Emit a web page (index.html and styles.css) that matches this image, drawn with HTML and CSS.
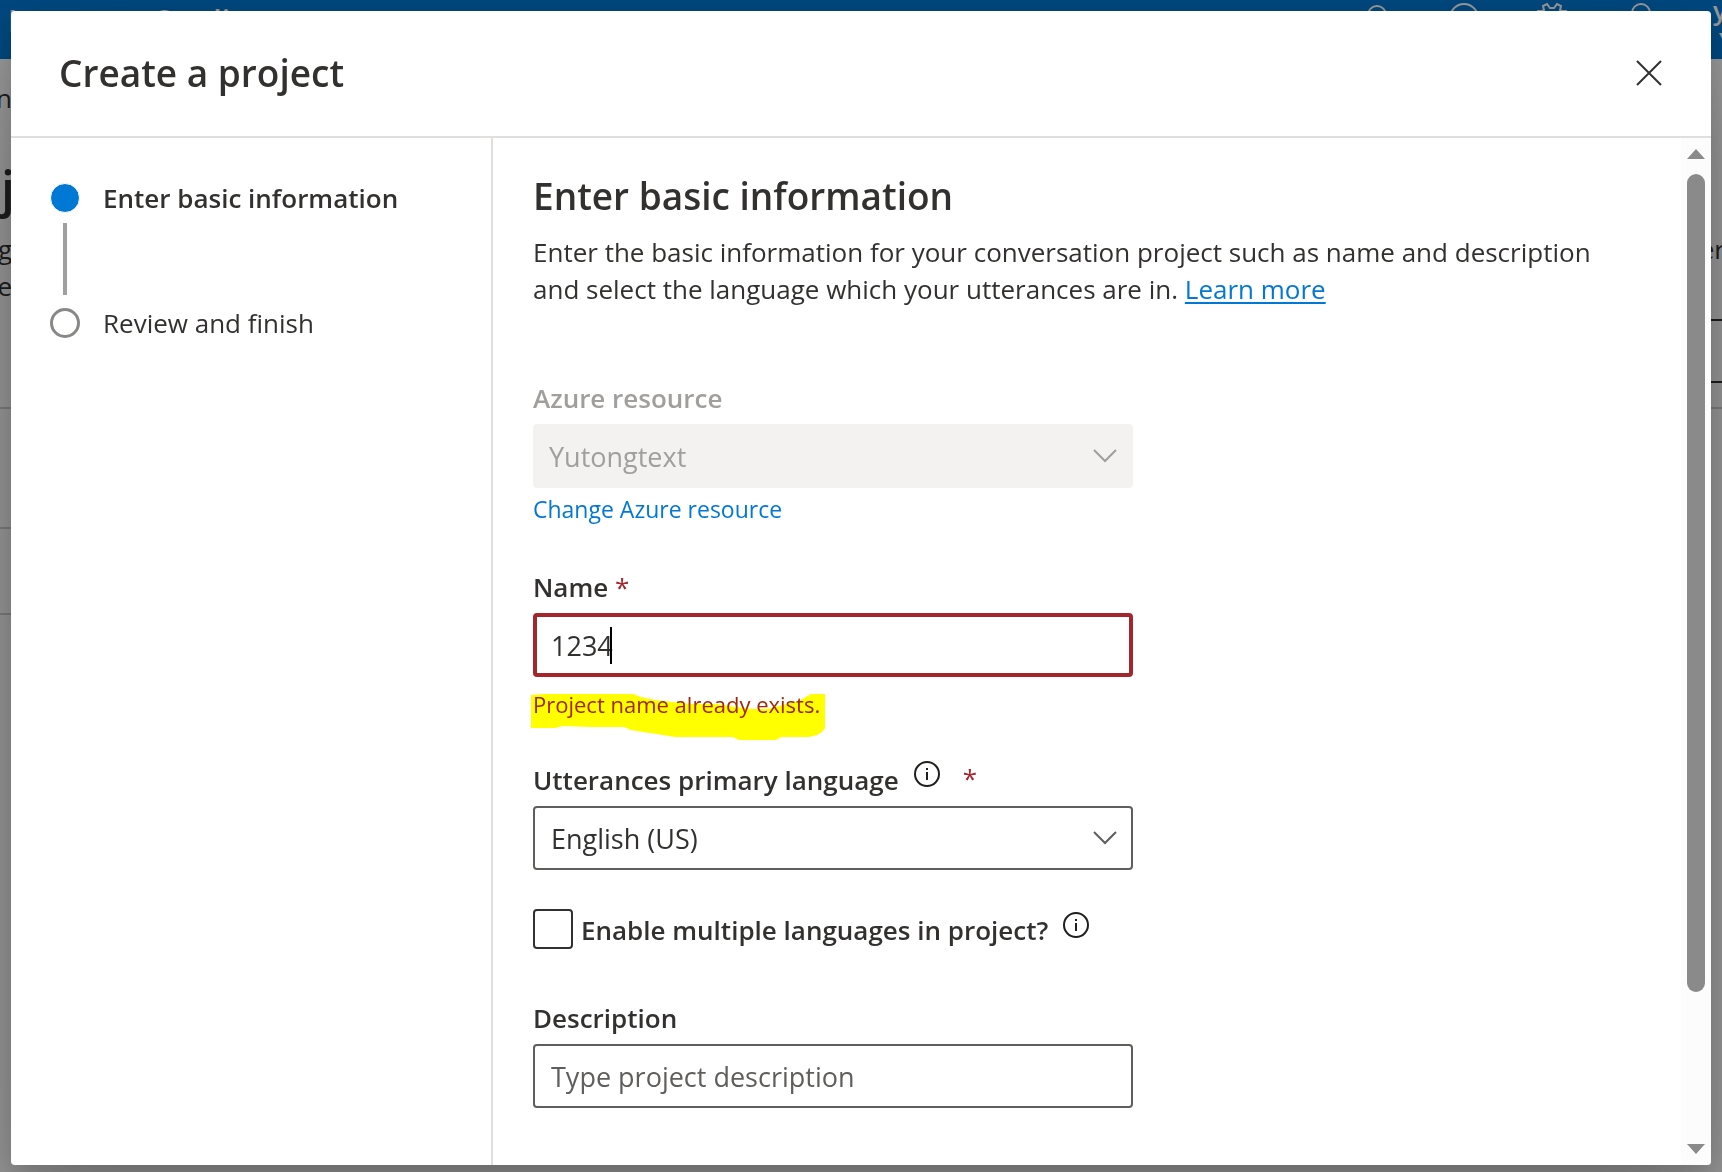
FILE: index.html
```html
<!DOCTYPE html>
<html lang="en">
<head>
<meta charset="utf-8">
<title>Create a project</title>
<link rel="stylesheet" href="styles.css">
</head>
<body>
<div class="page" aria-hidden="true">
  <div class="topbar">
    <span class="brand">Language Studio</span>
    <div class="tools">
      <svg class="tool" viewBox="0 0 30 30"><circle cx="16" cy="13" r="9"/><path d="M9 20l-6 7"/></svg>
      <svg class="tool" viewBox="0 0 30 30"><circle cx="15" cy="16" r="14"/></svg>
      <svg class="tool" viewBox="0 0 30 30"><path d="M1 9l4 0 2-1-1-4 4-2 3 4h4l3-4 4 2-1 4 2 1 4 0v8l-4 3 1 5-5 3-3-3h-6l-3 3-5-3 1-5-4-3z"/></svg>
      <svg class="tool" viewBox="0 0 30 30"><circle cx="16" cy="11" r="9"/><path d="M3 29c2-12 22-12 24 0"/></svg>
    </div>
    <div class="account"><span>y</span><span class="account-sub">Y</span></div>
  </div>
  <div class="backdrop-body">
    <div class="edge edge-left">
      <span class="crumb">n</span>
      <span class="page-title">oj</span>
      <span class="copy">g</span>
      <span class="copy">e</span>
      <div class="row row-first"></div>
      <div class="row row-second"></div>
      <div class="row row-third"></div>
    </div>
    <div class="edge edge-right">
      <span class="copy">er</span>
      <div class="search"></div>
      <div class="row row-search"></div>
    </div>
  </div>
</div>

<div class="overlay">
  <section class="dialog" role="dialog" aria-modal="true" aria-labelledby="dialog-title">
    <header class="dialog-header">
      <h1 class="dialog-title" id="dialog-title">Create a project</h1>
      <button class="close" type="button" aria-label="Close">
        <svg viewBox="0 0 26 26"><path d="M1 1l24 24M25 1L1 25"/></svg>
      </button>
    </header>
    <div class="dialog-body">
      <ol class="steps">
        <li class="step step-current"><span class="dot"></span><span>Enter basic information</span></li>
        <li class="connector" aria-hidden="true"></li>
        <li class="step"><span class="ring"></span><span>Review and finish</span></li>
      </ol>
      <form class="form">
        <h2 class="form-title">Enter basic information</h2>
        <p class="intro">Enter the basic information for your conversation project such as name and description and select the language which your utterances are in. <a class="learn" href="#">Learn more</a></p>

        <div class="field field-resource">
          <label class="label label-disabled" for="resource">Azure resource</label>
          <div class="control">
            <select class="box box-disabled" id="resource" disabled><option>Yutongtext</option></select>
            <svg class="chevron chevron-disabled" viewBox="0 0 24 14"><path d="M1 1l11 11L23 1"/></svg>
          </div>
          <a class="small change" href="#">Change Azure resource</a>
        </div>

        <div class="field field-name">
          <label class="label" for="name">Name <span class="required">*</span></label>
          <div class="control">
            <input class="box box-error" id="name" type="text" value="1234" aria-describedby="name-error">
            <span class="caret"></span>
          </div>
          <p class="small error" id="name-error">
            <svg class="marker" viewBox="0 0 294 46"><path d="M0 2L12 1H102L110 4 124 7 142 9 160 11H186L204 14 222 16H236L252 12 268 8 280 1H294V35L291 39 286 42 278 44H250L245 47H208L202 44H144L126 41 112 39 100 37 93 34H60L32 33 24 35H0z"/></svg>
            <span class="error-text">Project name already exists.</span>
          </p>
        </div>

        <div class="field">
          <div class="label-row">
            <label class="label" for="language">Utterances primary language</label>
            <svg class="info" viewBox="0 0 28 28"><circle cx="14" cy="14" r="12"/><path d="M14 12v8M14 8v2"/></svg>
            <span class="required">*</span>
          </div>
          <div class="control">
            <select class="box" id="language"><option>English (US)</option></select>
            <svg class="chevron" viewBox="0 0 24 14"><path d="M1 1l11 11L23 1"/></svg>
          </div>
        </div>

        <div class="check-row">
          <input class="check" id="multi" type="checkbox">
          <label class="label" for="multi">Enable multiple languages in project?</label>
          <svg class="info" viewBox="0 0 28 28"><circle cx="14" cy="14" r="12"/><path d="M14 12v8M14 8v2"/></svg>
        </div>

        <div class="field">
          <label class="label" for="description">Description</label>
          <input class="box" id="description" type="text" placeholder="Type project description">
        </div>
      </form>
      <div class="scrollbar" aria-hidden="true">
        <svg class="arrow" viewBox="0 0 18 10"><path d="M0 10L9 0l9 10z"/></svg>
        <div class="track"><div class="thumb"></div></div>
        <svg class="arrow" viewBox="0 0 18 10"><path d="M0 0h18L9 10z"/></svg>
      </div>
    </div>
  </section>
</div>
</body>
</html>
```
FILE: styles.css
```css
* {
  box-sizing: border-box;
}

body {
  margin: 0;
  height: 100vh;
  overflow: hidden;
  font-family: "Open Sans", "Noto Sans", sans-serif;
  font-size: 26px;
  color: #323130;
  background: #fff;
}

h1, h2, p, ol {
  margin: 0;
  padding: 0;
}

svg {
  display: block;
  fill: none;
  stroke: currentColor;
}

/* Page behind the dialog */
.topbar {
  display: flex;
  justify-content: space-between;
  height: 59px;
  padding-left: 8px;
  background: #0078d4;
  color: #fff;
}

.brand {
  flex: 1;
  font-size: 30px;
  font-weight: 600;
  line-height: 42px;
}

.tools {
  display: flex;
  gap: 58px;
  padding-top: 2px;
  margin-right: 58px;
}

.tool {
  width: 30px;
  height: 30px;
  stroke-width: 2;
}

.account {
  display: flex;
  flex-direction: column;
  width: 9px;
  overflow: hidden;
  font-weight: 600;
  line-height: 20px;
}

.account-sub {
  padding-left: 6px;
  font-size: 22px;
  line-height: 40px;
}

.backdrop-body {
  display: flex;
  justify-content: space-between;
}

.edge {
  display: flex;
  flex-direction: column;
  align-items: flex-end;
  width: 12px;
}

.edge-left {
  padding-top: 21px;
}

.edge-right {
  padding-top: 172px;
}

.crumb {
  line-height: 36px;
}

.page-title {
  padding: 42px 0 13px;
  margin-right: -3px;
  font-size: 50px;
  font-weight: 600;
  line-height: 60px;
}

.copy {
  line-height: 37px;
}

.edge-right .copy {
  margin-right: -3px;
}

.row {
  align-self: stretch;
  border-bottom: 2px solid #d2d0ce;
}

.row-first {
  height: 104px;
}

.row-second {
  height: 120px;
}

.row-third {
  height: 86px;
}

.search {
  align-self: stretch;
  height: 64px;
  margin-top: 110px;
  border: 2px solid #323130;
  border-width: 2px 0;
  margin-top: 51px;
}

.row-search {
  height: 26px;
}

/* Dialog */
.overlay {
  position: fixed;
  inset: 0;
  display: flex;
  padding: 11px 11px 7px;
  background: rgba(0, 0, 0, 0.4);
}

.dialog {
  flex: 1;
  display: flex;
  flex-direction: column;
  overflow: hidden;
  background: #fff;
  border-radius: 4px;
  box-shadow: 0 51px 115px rgba(0, 0, 0, 0.22), 0 10px 29px rgba(0, 0, 0, 0.18);
}

.dialog-header {
  display: flex;
  align-items: center;
  justify-content: space-between;
  height: 127px;
  padding: 0 49px 2px 48px;
  border-bottom: 2px solid #e1dfdd;
}

.dialog-title,
.form-title {
  font-size: 37px;
  font-weight: 600;
  line-height: 48px;
}

.close {
  padding: 0;
  border: 0;
  background: none;
  color: #323130;
}

.close svg {
  width: 26px;
  height: 26px;
  stroke-width: 2;
}

.dialog-body {
  flex: 1;
  display: flex;
  min-height: 0;
}

.steps {
  width: 482px;
  padding: 45px 0 0 39px;
  border-right: 2px solid #e1dfdd;
  list-style: none;
}

.step {
  display: flex;
  align-items: center;
  gap: 23px;
  height: 30px;
}

.step-current {
  font-weight: 600;
}

.dot,
.ring {
  width: 30px;
  height: 30px;
  border-radius: 50%;
}

.dot {
  border: 1px solid #fff;
  background: #0078d4;
}

.ring {
  border: 3px solid #8a8886;
}

.connector {
  width: 4px;
  height: 72px;
  margin: 10px 13px 13px;
  background: #a19f9d;
}

/* Form */
.form {
  flex: 1;
  padding: 34px 40px 0;
  overflow: hidden;
}

.intro {
  margin-top: 14px;
  line-height: 37px;
}

.learn {
  color: #0078d4;
  text-decoration-thickness: 2px;
  text-underline-offset: 3px;
}

.field {
  width: 600px;
}

.field-resource {
  margin: 70px 0 42px;
}

.field-name {
  margin-bottom: 40px;
}

.label {
  display: block;
  padding-top: 2px;
  font-weight: 600;
  line-height: 36px;
}

.label-disabled {
  color: #a19f9d;
}

.required {
  color: #a4262c;
  font-weight: 400;
}

.label-row {
  display: flex;
  line-height: 36px;
}

.label-row .required {
  padding-left: 22px;
}

.info {
  width: 28px;
  height: 28px;
  margin-left: 14px;
  color: #201f1e;
  stroke-width: 2;
}

.control {
  position: relative;
}

.box {
  display: block;
  width: 100%;
  height: 64px;
  margin: 8px 0 0;
  padding: 0 16px;
  border: 2px solid #605e5c;
  border-radius: 4px;
  outline: 0;
  appearance: none;
  background: #fff;
  color: #323130;
  font: inherit;
  font-size: 27px;
}

.box::placeholder {
  color: #605e5c;
  opacity: 1;
}

.box-disabled {
  padding: 0 14px;
  border-color: #f3f2f1;
  background: #f3f2f1;
  color: #a19f9d;
  opacity: 1;
}

.box-error {
  padding: 0 14px;
  border: 4px solid #a4262c;
}

.caret {
  position: absolute;
  left: 77px;
  top: 14px;
  width: 2px;
  height: 37px;
  background: #000;
}

.chevron {
  position: absolute;
  right: 16px;
  top: 25px;
  width: 24px;
  height: 14px;
  color: #605e5c;
  pointer-events: none;
  stroke-width: 2;
}

.chevron-disabled {
  color: #a19f9d;
}

.small {
  display: block;
  line-height: 32px;
}

.change {
  margin-top: 5px;
  color: #0078d4;
  font-size: 23px;
  text-decoration: none;
}

.error {
  position: relative;
  margin-top: 11px;
  color: #a4262c;
  font-size: 22px;
}

.marker {
  position: absolute;
  left: -2px;
  top: 5px;
  width: 294px;
  height: 46px;
  overflow: visible;
  fill: #ff0;
  stroke: none;
}

.error-text {
  position: relative;
  color: #a42600;
}

.check-row {
  display: flex;
  align-items: center;
  height: 40px;
  margin: 39px 0 49px;
}

.check {
  width: 40px;
  height: 40px;
  margin: 0 8px 0 0;
  border: 2px solid #323130;
  border-radius: 4px;
  appearance: none;
  background: #fff;
}

.check-row .info {
  margin-bottom: 8px;
}

/* Scrollbar */
.scrollbar {
  display: flex;
  flex-direction: column;
  align-items: center;
  width: 30px;
  padding: 11px 0;
  background: #fcfcfc;
  color: #8a8a8a;
}

.arrow {
  width: 18px;
  height: 10px;
  fill: currentColor;
  stroke: none;
}

.track {
  flex: 1;
  width: 18px;
  padding: 15px 0 19px;
}

.thumb {
  height: 86%;
  border-radius: 9px;
  background: #8a8a8a;
}
```
